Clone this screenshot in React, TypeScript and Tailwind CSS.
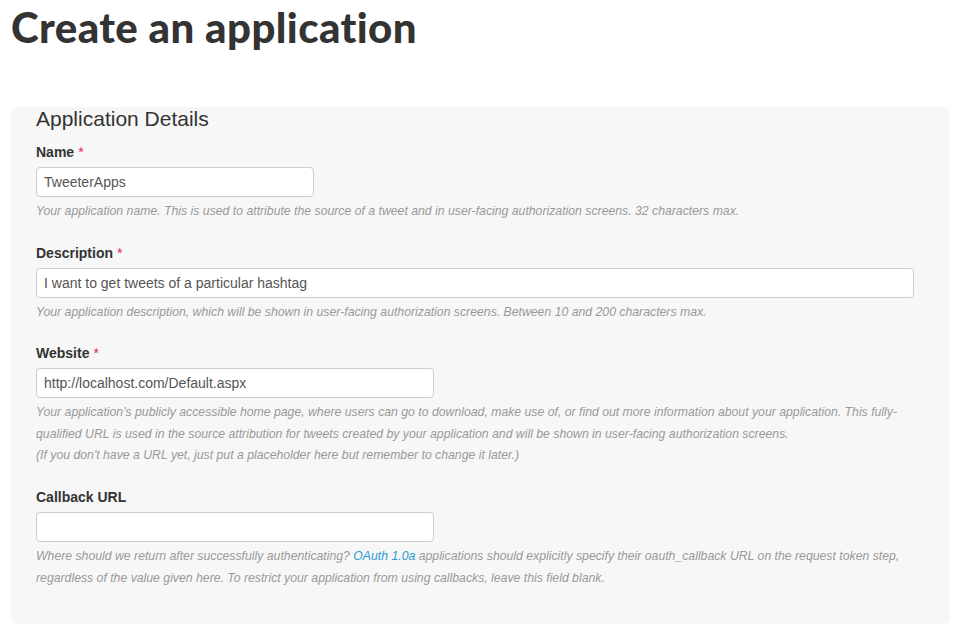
import React from 'react';

const Field = ({
  label,
  required,
  value,
  width,
  help,
  top = 'mt-5',
}: {
  label: string;
  required?: boolean;
  value: string;
  width: string;
  help: React.ReactNode;
  top?: string;
}) => (
  <div className={top}>
    <label className="block h-5 text-[14px] leading-5 font-bold text-[#333]">
      {label}
      {required && <span className="ml-1 font-normal text-[#e0245e]">*</span>}
    </label>
    <input
      readOnly
      value={value}
      className={`mt-[5px] block h-[30px] ${width} rounded-[4px] border border-[#ccc] bg-white px-[7px] text-[14px] text-[#555] outline-none`}
    />
    <p className="mt-1 w-[880px] text-[12.25px] leading-[21.6px] italic text-[#999]">{help}</p>
  </div>
);

const App = () => {
  return (
    <div className="min-h-[627px] bg-white pl-[11px] pr-[5px] font-['Liberation_Sans',Arial,sans-serif]">
      <h1 className="h-[107px] font-['Lato',sans-serif] text-[42px] font-black leading-[54px] tracking-[0.4px] text-[#333]">
        Create an application
      </h1>
      <div className="h-[517px] rounded-[6px] bg-[#f7f7f7] pl-[25px]">
        <h2 className="h-6 text-[21px] leading-6 text-[#333]">Application Details</h2>
        <Field
          top="mt-[11px]"
          label="Name"
          required
          value="TweeterApps"
          width="w-[278px]"
          help="Your application name. This is used to attribute the source of a tweet and in user-facing authorization screens. 32 characters max."
        />
        <Field
          label="Description"
          required
          value="I want to get tweets of a particular hashtag"
          width="w-[878px]"
          help="Your application description, which will be shown in user-facing authorization screens. Between 10 and 200 characters max."
        />
        <Field
          label="Website"
          required
          value="http://localhost.com/Default.aspx"
          width="w-[398px]"
          help={
            <>
              Your application's publicly accessible home page, where users can go to download, make use of, or find out more information about your application. This fully-qualified URL is used in the source attribution for tweets created by your application and will be shown in user-facing authorization screens.
              <br />
              (If you don't have a URL yet, just put a placeholder here but remember to change it later.)
            </>
          }
        />
        <Field
          label="Callback URL"
          value=""
          width="w-[398px]"
          help={
            <>
              Where should we return after successfully authenticating?{' '}
              <a className="text-[#2b9bd6]">OAuth 1.0a</a> applications should explicitly specify their oauth_callback URL on the request token step, regardless of the value given here. To restrict your application from using callbacks, leave this field blank.
            </>
          }
        />
      </div>
    </div>
  );
};

export default App;
